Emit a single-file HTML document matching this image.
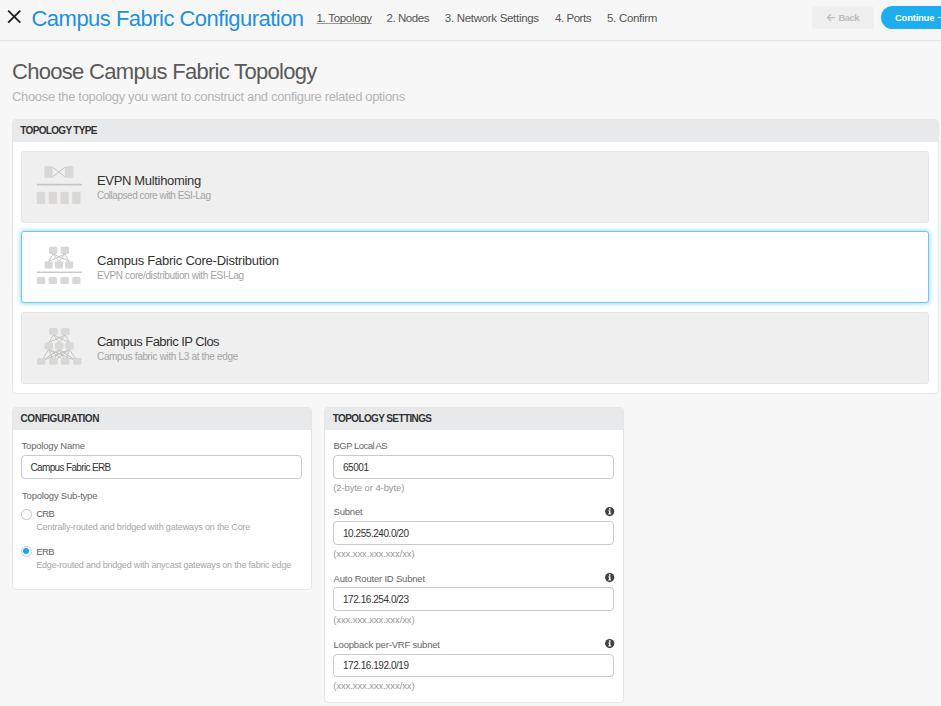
<!DOCTYPE html>
<html><head><meta charset="utf-8"><style>
*{box-sizing:border-box;margin:0;padding:0}
html,body{width:941px;height:706px;overflow:hidden;background:#f7f7f7;font-family:"Liberation Sans",sans-serif;color:#333;position:relative}
.t{position:absolute;white-space:nowrap}
.r{position:absolute}
</style></head><body>
<div class="r" style="left:0;top:40px;width:941px;height:1px;background:#e3e3e3"></div>
<svg class="r" style="left:0;top:0" width="30" height="35" viewBox="0 0 30 35"><path d="M8.2 10.6L20.3 22.6M20.3 10.6L8.2 22.6" stroke="#222" stroke-width="1.9"/></svg>
<div class="t" style="left:31.5px;top:3.58px;font-size:22px;line-height:29px;color:#2290e0;font-weight:normal;letter-spacing:-0.52px;">Campus Fabric Configuration</div>
<div class="t" style="left:316.5px;top:10.92px;font-size:11.5px;line-height:15px;color:#555;font-weight:normal;letter-spacing:-0.3px;text-decoration:underline;text-decoration-color:#9a9a9a;text-underline-offset:0.6px;text-decoration-skip-ink:none">1. Topology</div>
<div class="t" style="left:386.5px;top:10.92px;font-size:11.5px;line-height:15px;color:#555;font-weight:normal;letter-spacing:-0.45px;">2. Nodes</div>
<div class="t" style="left:444.8px;top:10.92px;font-size:11.5px;line-height:15px;color:#555;font-weight:normal;letter-spacing:-0.3px;">3. Network Settings</div>
<div class="t" style="left:555px;top:10.92px;font-size:11.5px;line-height:15px;color:#555;font-weight:normal;letter-spacing:-0.45px;">4. Ports</div>
<div class="t" style="left:607px;top:10.92px;font-size:11.5px;line-height:15px;color:#555;font-weight:normal;letter-spacing:-0.3px;">5. Confirm</div>
<div class="r" style="left:812px;top:6px;width:62px;height:23px;border-radius:4px;background:#efefef"></div>
<svg class="r" style="left:826px;top:13px" width="10" height="10" viewBox="0 0 10 10"><path d="M9 4.6H1.8M5 1.2L1.4 4.6L5 8" stroke="#bdbdbd" stroke-width="1.3" fill="none"/></svg>
<div class="t" style="left:838.5px;top:11.81px;font-size:9.5px;line-height:12px;color:#bfbdbb;font-weight:bold;letter-spacing:-0.6px;">Back</div>
<div class="r" style="left:880.5px;top:6px;width:90px;height:23px;border-radius:11.5px;background:#1eaef0"></div>
<div class="t" style="left:895px;top:11.71px;font-size:9.5px;line-height:12px;color:#fff;font-weight:bold;letter-spacing:-0.25px;">Continue</div>
<div class="r" style="left:938px;top:17px;width:4px;height:1.3px;background:#fff"></div>
<div class="t" style="left:12px;top:57.18px;font-size:22px;line-height:29px;color:#5a5a5a;font-weight:normal;letter-spacing:-0.7px;">Choose Campus Fabric Topology</div>
<div class="t" style="left:12px;top:88.00px;font-size:13px;line-height:17px;color:#b5b5b5;font-weight:normal;letter-spacing:-0.34px;">Choose the topology you want to construct and configure related options</div>
<div class="r" style="left:12px;top:119px;width:927px;height:275px;background:#fff;border:1px solid #e6e6e6;border-radius:4px;overflow:hidden"><div style="height:22px;background:#e8e9ea"></div></div>
<div class="t" style="left:20.3px;top:123.94px;font-size:10px;line-height:13px;color:#333;font-weight:bold;letter-spacing:-0.67px;">TOPOLOGY TYPE</div>
<div class="r" style="left:21px;top:151px;width:908px;height:72px;background:#efefef;border:1px solid #e5e5e5;border-radius:3px"></div>
<div class="t" style="left:97px;top:171.50px;font-size:13px;line-height:17px;color:#333;font-weight:normal;letter-spacing:-0.33px;">EVPN Multihoming</div>
<div class="t" style="left:97px;top:189.03px;font-size:10px;line-height:13px;color:#a3a3a3;font-weight:normal;letter-spacing:-0.47px;">Collapsed core with ESI-Lag</div>
<div class="r" style="left:21px;top:231px;width:908px;height:72px;background:#fff;border:1px solid #6acaf6;border-radius:3px;box-shadow:0 0 4px 0.5px #a6defa"></div>
<div class="t" style="left:97px;top:251.50px;font-size:13px;line-height:17px;color:#333;font-weight:normal;letter-spacing:-0.24px;">Campus Fabric Core-Distribution</div>
<div class="t" style="left:97px;top:269.04px;font-size:10px;line-height:13px;color:#a3a3a3;font-weight:normal;letter-spacing:-0.38px;">EVPN core/distribution with ESI-Lag</div>
<div class="r" style="left:21px;top:312px;width:908px;height:72px;background:#efefef;border:1px solid #e5e5e5;border-radius:3px"></div>
<div class="t" style="left:97px;top:332.50px;font-size:13px;line-height:17px;color:#333;font-weight:normal;letter-spacing:-0.54px;">Campus Fabric IP Clos</div>
<div class="t" style="left:97px;top:350.04px;font-size:10px;line-height:13px;color:#a3a3a3;font-weight:normal;letter-spacing:-0.33px;">Campus fabric with L3 at the edge</div>
<svg class="r" style="left:0;top:0" width="100" height="400" viewBox="0 0 100 400"><rect x="44.3" y="166" width="8.3" height="11.8" rx="1.5" fill="#d9d8d6"/><rect x="65" y="166" width="8.3" height="11.8" rx="1.5" fill="#d9d8d6"/><path d="M52.5 167.2L65 177M52.5 177L65 167.2" stroke="#bdbcba" stroke-width="0.9"/><rect x="36.8" y="183.8" width="45" height="1.6" fill="#c5c4c2"/><rect x="36.8" y="191.7" width="8.4" height="12.2" rx="1.5" fill="#d9d8d6"/><rect x="48.6" y="191.7" width="8.4" height="12.2" rx="1.5" fill="#d9d8d6"/><rect x="60.4" y="191.7" width="8.4" height="12.2" rx="1.5" fill="#d9d8d6"/><rect x="72.2" y="191.7" width="8.4" height="12.2" rx="1.5" fill="#d9d8d6"/><path d="M53.15 254L48.7 261.3M53.15 254L59 261.3M53.15 254L69.1 261.3M64.85 254L48.7 261.3M64.85 254L59 261.3M64.85 254L69.1 261.3" stroke="#bdbcba" stroke-width="0.85" fill="none"/><rect x="48.9" y="246.8" width="8.5" height="7.2" rx="1.5" fill="#d9d8d6"/><rect x="60.6" y="246.8" width="8.5" height="7.2" rx="1.5" fill="#d9d8d6"/><rect x="44.6" y="261.2" width="8.2" height="7.2" rx="1.5" fill="#d9d8d6"/><rect x="54.9" y="261.2" width="8.2" height="7.2" rx="1.5" fill="#d9d8d6"/><rect x="65" y="261.2" width="8.2" height="7.2" rx="1.5" fill="#d9d8d6"/><rect x="36.8" y="271.6" width="45" height="1.3" fill="#c5c4c2"/><rect x="36.8" y="277" width="8.4" height="7" rx="1.5" fill="#d9d8d6"/><rect x="48.6" y="277" width="8.4" height="7" rx="1.5" fill="#d9d8d6"/><rect x="60.4" y="277" width="8.4" height="7" rx="1.5" fill="#d9d8d6"/><rect x="72.2" y="277" width="8.4" height="7" rx="1.5" fill="#d9d8d6"/><path d="M53.4 334.9L48.8 342.6M53.4 334.9L59.2 342.6M53.4 334.9L69.5 342.6M65.3 334.9L48.8 342.6M65.3 334.9L59.2 342.6M65.3 334.9L69.5 342.6M48.8 349.4L41.25 361.4M48.8 349.4L53.35 361.4M48.8 349.4L65.25 361.4M48.8 349.4L77.35 361.4M59.2 349.4L41.25 361.4M59.2 349.4L53.35 361.4M59.2 349.4L65.25 361.4M59.2 349.4L77.35 361.4M69.5 349.4L41.25 361.4M69.5 349.4L53.35 361.4M69.5 349.4L65.25 361.4M69.5 349.4L77.35 361.4" stroke="#bdbcba" stroke-width="0.85" fill="none"/><rect x="49.1" y="328" width="8.6" height="6.9" rx="1.5" fill="#d9d8d6"/><rect x="61" y="328" width="8.6" height="6.9" rx="1.5" fill="#d9d8d6"/><rect x="44.6" y="342.5" width="8.4" height="6.9" rx="1.5" fill="#d9d8d6"/><rect x="55" y="342.5" width="8.4" height="6.9" rx="1.5" fill="#d9d8d6"/><rect x="65.3" y="342.5" width="8.4" height="6.9" rx="1.5" fill="#d9d8d6"/><rect x="37" y="358" width="8.5" height="6.8" rx="1.5" fill="#d9d8d6"/><rect x="49.1" y="358" width="8.5" height="6.8" rx="1.5" fill="#d9d8d6"/><rect x="61" y="358" width="8.5" height="6.8" rx="1.5" fill="#d9d8d6"/><rect x="73.1" y="358" width="8.5" height="6.8" rx="1.5" fill="#d9d8d6"/></svg>
<div class="r" style="left:12px;top:407px;width:300px;height:183px;background:#fff;border:1px solid #e6e6e6;border-radius:4px;overflow:hidden"><div style="height:22px;background:#e8e9ea"></div></div>
<div class="t" style="left:20.5px;top:412.34px;font-size:10px;line-height:13px;color:#333;font-weight:bold;letter-spacing:-0.4px;">CONFIGURATION</div>
<div class="t" style="left:21.5px;top:440.31px;font-size:9.5px;line-height:12px;color:#666;font-weight:normal;letter-spacing:-0.2px;">Topology Name</div>
<div class="r" style="left:21px;top:455px;width:281px;height:23.6px;border:1px solid #cacaca;border-radius:4px;background:#fff"></div>
<div class="t" style="left:30.5px;top:460.84px;font-size:10px;line-height:13px;color:#333;font-weight:normal;letter-spacing:-0.65px;">Campus Fabric ERB</div>
<div class="t" style="left:22px;top:490.01px;font-size:9.5px;line-height:12px;color:#666;font-weight:normal;letter-spacing:-0.2px;">Topology Sub-type</div>
<div class="r" style="left:21px;top:509px;width:10.5px;height:10.5px;border-radius:50%;border:1px solid #c4c4c4;background:#fff"></div>
<div class="t" style="left:36.2px;top:508.21px;font-size:9.5px;line-height:12px;color:#666;font-weight:normal;letter-spacing:-0.7px;">CRB</div>
<div class="t" style="left:36.2px;top:521.38px;font-size:9px;line-height:12px;color:#a5a5a5;font-weight:normal;letter-spacing:-0.16px;">Centrally-routed and bridged with gateways on the Core</div>
<div class="r" style="left:21px;top:546px;width:10.5px;height:10.5px;border-radius:50%;border:1px solid #cfcfcf;background:#fff"></div>
<div class="r" style="left:23.05px;top:548.05px;width:6.4px;height:6.4px;border-radius:50%;background:#1aa6f0"></div>
<div class="t" style="left:36.2px;top:545.61px;font-size:9.5px;line-height:12px;color:#666;font-weight:normal;letter-spacing:-0.6px;">ERB</div>
<div class="t" style="left:36.2px;top:558.78px;font-size:9px;line-height:12px;color:#a5a5a5;font-weight:normal;letter-spacing:-0.185px;">Edge-routed and bridged with anycast gateways on the fabric edge</div>
<div class="r" style="left:324px;top:407px;width:300px;height:296px;background:#fff;border:1px solid #e6e6e6;border-radius:4px;overflow:hidden"><div style="height:22px;background:#e8e9ea"></div></div>
<div class="t" style="left:332.8px;top:412.34px;font-size:10px;line-height:13px;color:#333;font-weight:bold;letter-spacing:-0.62px;">TOPOLOGY SETTINGS</div>
<div class="t" style="left:333.5px;top:440.31px;font-size:9.5px;line-height:12px;color:#666;font-weight:normal;letter-spacing:-0.53px;">BGP Local AS</div>
<div class="r" style="left:333px;top:455.2px;width:281px;height:23.6px;border:1px solid #cacaca;border-radius:4px;background:#fff"></div>
<div class="t" style="left:343px;top:460.84px;font-size:10px;line-height:13px;color:#333;font-weight:normal;letter-spacing:-0.45px;">65001</div>
<div class="t" style="left:333.2px;top:481.91px;font-size:9.5px;line-height:12px;color:#999;font-weight:normal;letter-spacing:-0.1px;">(2-byte or 4-byte)</div>
<div class="t" style="left:333.5px;top:506.41px;font-size:9.5px;line-height:12px;color:#666;font-weight:normal;letter-spacing:-0.2px;">Subnet</div>
<div class="r" style="left:333px;top:521.3px;width:281px;height:23.6px;border:1px solid #cacaca;border-radius:4px;background:#fff"></div>
<div class="t" style="left:343px;top:526.93px;font-size:10px;line-height:13px;color:#333;font-weight:normal;letter-spacing:-0.45px;">10.255.240.0/20</div>
<div class="t" style="left:333.2px;top:548.01px;font-size:9.5px;line-height:12px;color:#999;font-weight:normal;letter-spacing:-0.1px;">(xxx.xxx.xxx.xxx/xx)</div>
<svg class="r" style="left:604px;top:505.8px" width="12" height="12" viewBox="0 0 12 12"><circle cx="5.7" cy="5.6" r="4.6" fill="#3f3f3f"/><rect x="5" y="4.4" width="1.5" height="3.6" fill="#fff"/><rect x="4.2" y="7.4" width="3" height="1" fill="#fff"/><rect x="4.3" y="4.4" width="1.5" height="1" fill="#fff"/><circle cx="5.75" cy="2.9" r="0.85" fill="#fff"/></svg>
<div class="t" style="left:333.5px;top:572.51px;font-size:9.5px;line-height:12px;color:#666;font-weight:normal;letter-spacing:-0.2px;">Auto Router ID Subnet</div>
<div class="r" style="left:333px;top:587.4px;width:281px;height:23.6px;border:1px solid #cacaca;border-radius:4px;background:#fff"></div>
<div class="t" style="left:343px;top:593.03px;font-size:10px;line-height:13px;color:#333;font-weight:normal;letter-spacing:-0.45px;">172.16.254.0/23</div>
<div class="t" style="left:333.2px;top:614.11px;font-size:9.5px;line-height:12px;color:#999;font-weight:normal;letter-spacing:-0.1px;">(xxx.xxx.xxx.xxx/xx)</div>
<svg class="r" style="left:604px;top:571.9px" width="12" height="12" viewBox="0 0 12 12"><circle cx="5.7" cy="5.6" r="4.6" fill="#3f3f3f"/><rect x="5" y="4.4" width="1.5" height="3.6" fill="#fff"/><rect x="4.2" y="7.4" width="3" height="1" fill="#fff"/><rect x="4.3" y="4.4" width="1.5" height="1" fill="#fff"/><circle cx="5.75" cy="2.9" r="0.85" fill="#fff"/></svg>
<div class="t" style="left:333.5px;top:638.61px;font-size:9.5px;line-height:12px;color:#666;font-weight:normal;letter-spacing:-0.2px;">Loopback per-VRF subnet</div>
<div class="r" style="left:333px;top:653.5px;width:281px;height:23.6px;border:1px solid #cacaca;border-radius:4px;background:#fff"></div>
<div class="t" style="left:343px;top:659.13px;font-size:10px;line-height:13px;color:#333;font-weight:normal;letter-spacing:-0.45px;">172.16.192.0/19</div>
<div class="t" style="left:333.2px;top:680.21px;font-size:9.5px;line-height:12px;color:#999;font-weight:normal;letter-spacing:-0.1px;">(xxx.xxx.xxx.xxx/xx)</div>
<svg class="r" style="left:604px;top:638.0px" width="12" height="12" viewBox="0 0 12 12"><circle cx="5.7" cy="5.6" r="4.6" fill="#3f3f3f"/><rect x="5" y="4.4" width="1.5" height="3.6" fill="#fff"/><rect x="4.2" y="7.4" width="3" height="1" fill="#fff"/><rect x="4.3" y="4.4" width="1.5" height="1" fill="#fff"/><circle cx="5.75" cy="2.9" r="0.85" fill="#fff"/></svg>
</body></html>
